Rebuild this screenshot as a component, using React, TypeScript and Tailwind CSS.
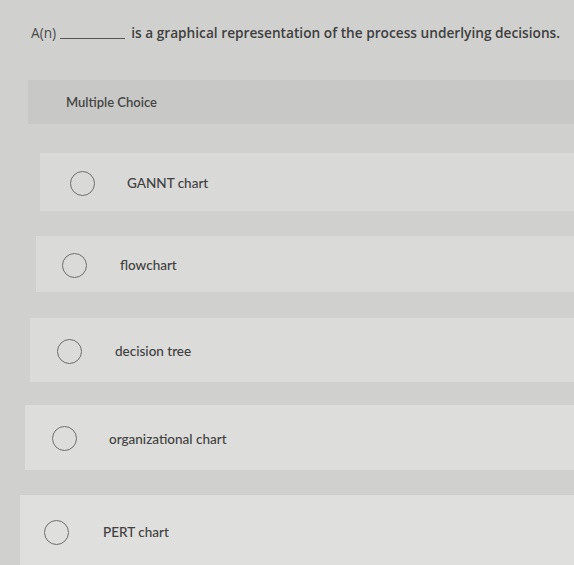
import React from "react";

type Option = {
  label: string;
  rowClass: string;
  circleClass: string;
};

const options: Option[] = [
  { label: "GANNT chart", rowClass: "ml-[40px] h-[58px] mt-[29px] bg-[#d9d9d7]", circleClass: "ml-[30px] mr-[32px]" },
  { label: "flowchart", rowClass: "ml-[36px] h-[56px] mt-[25px] bg-[#dadad8]", circleClass: "ml-[26px] mr-[33px]" },
  { label: "decision tree", rowClass: "ml-[30px] h-[64px] mt-[26px] bg-[#dbdbd9]", circleClass: "ml-[27px] mr-[33px]" },
  { label: "organizational chart", rowClass: "ml-[25px] h-[65px] mt-[23px] bg-[#dddddb]", circleClass: "ml-[27px] mr-[32px]" },
  { label: "PERT chart", rowClass: "ml-[20px] h-[72px] mt-[25px] bg-[#dfdfdd]", circleClass: "ml-[24px] mr-[34px]" },
];

const App: React.FC = () => {
  return (
    <div
      className="w-[574px] h-[565px] overflow-hidden bg-[#d0d0ce] text-[#3f3f3f]"
      style={{ fontFamily: "Lato, 'Liberation Sans', sans-serif" }}
    >
      {/* Question */}
      <div
        className="flex items-end pl-[31px] pt-[22px] text-[13.7px] font-semibold leading-none"
        style={{ fontFamily: "'Open Sans', Lato, sans-serif" }}
      >
        <span className="font-normal text-[#4a4a4a]">A(n)</span>
        <span className="ml-[4px] mr-[4px] mb-[1px] inline-block w-[65px] border-b border-[#555]" />
        <span className="ml-[2px] mt-[4px]">is a graphical representation of the process underlying decisions.</span>
      </div>

      {/* Multiple Choice band */}
      <div className="ml-[28px] mt-[40px] flex h-[44px] items-center bg-[#c8c8c6] pl-[38px]">
        <span className="mt-[2px] text-[13px] font-semibold text-[#454545]">Multiple Choice</span>
      </div>

      {/* Options */}
      <div className="flex flex-col">
        {options.map((o) => (
          <div key={o.label} className={`flex items-center pt-[3px] ${o.rowClass}`}>
            <span
              className={`inline-block h-[25px] w-[25px] shrink-0 rounded-full border-[1.5px] border-[#6e6e6e] ${o.circleClass}`}
            />
            <span className="text-[13.5px] font-medium text-[#404040]">{o.label}</span>
          </div>
        ))}
      </div>
    </div>
  );
};

export default App;
